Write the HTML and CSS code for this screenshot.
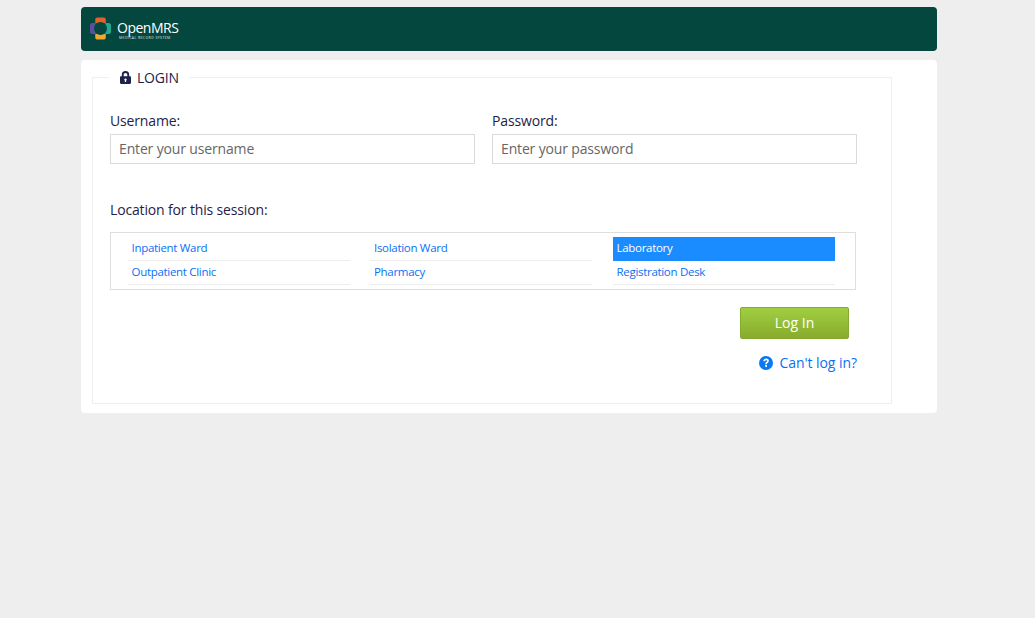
FILE: index.html
```html
<!DOCTYPE html>
<html lang="en">
<head>
<meta charset="utf-8">
<title>Login</title>
<link rel="stylesheet" href="styles.css">
</head>
<body>
<div class="page">
  <header class="topbar">
    <svg class="logo-mark" width="21" height="23" viewBox="0 0 22 23" aria-hidden="true">
      <path d="M5.500 2.200C5.500 .8 6.500 0 7.800 0H14.200C15.500 0 16.500 .8 16.500 2.200V6H5.500Z" fill="#e2622b"/>
      <path d="M16 5.800H19.500C21 5.800 22 6.800 22 8.200V14.800C22 16.200 21 17.200 19.500 17.200H16Z" fill="#25a78f"/>
      <path d="M5.500 17H16.500V20.800C16.500 22.200 15.500 23 14.200 23H7.800C6.500 23 5.500 22.200 5.500 20.800Z" fill="#f0a72d"/>
      <path d="M6 5.800H2.500C1 5.800 0 6.800 0 8.200V14.800C0 16.200 1 17.200 2.500 17.200H6Z" fill="#5b4f9e"/>
      <circle cx="11" cy="11.500" r="6.800" fill="#03473f"/>
    </svg>
    <div class="brand">
      <span class="brand-name">OpenMRS</span>
      <span class="brand-sub">MEDICAL RECORD SYSTEM</span>
    </div>
  </header>
  <main class="card">
    <form class="login">
      <div class="legend">
        <svg class="lock" width="11" height="13" viewBox="0 0 12 14" aria-hidden="true">
          <path fill-rule="evenodd" d="M2 5.500V4a4 4 0 0 1 8 0v1.500h.8c.7 0 1.200.5 1.200 1.200v6.100c0 .7-.5 1.200-1.200 1.200H1.200C.5 14 0 13.500 0 12.800V6.700c0-.7.500-1.200 1.200-1.200zM4 5.500h4V4a2 2 0 0 0-4 0zM6 8a1.300 1.300 0 0 0-.7 2.400V12h1.400v-1.600A1.300 1.300 0 0 0 6 8z" fill="#1f2248"/>
        </svg>
        <span>LOGIN</span>
      </div>
      <div class="fields">
        <label class="field">
          <span class="field-label">Username:</span>
          <input class="input" type="text" placeholder="Enter your username">
        </label>
        <label class="field">
          <span class="field-label">Password:</span>
          <input class="input" type="password" placeholder="Enter your password">
        </label>
      </div>
      <div class="location-label">Location for this session:</div>
      <ul class="locations">
        <li class="location">Inpatient Ward</li>
        <li class="location">Isolation Ward</li>
        <li class="location selected">Laboratory</li>
        <li class="location">Outpatient Clinic</li>
        <li class="location">Pharmacy</li>
        <li class="location">Registration Desk</li>
      </ul>
      <div class="actions">
        <button class="submit" type="button">Log In</button>
        <a class="help" href="#">
          <svg width="14" height="14" viewBox="0 0 15 15" aria-hidden="true">
            <circle cx="7.500" cy="7.500" r="7.500" fill="#0a78f0"/>
            <path d="M4.600 5.500C4.800 3.800 6 2.800 7.700 2.800C9.400 2.800 10.600 3.800 10.600 5.200C10.600 6.400 9.900 6.900 9.200 7.400C8.600 7.800 8.500 8.100 8.500 8.800H6.700C6.700 7.700 7 7.100 7.900 6.500C8.400 6.100 8.800 5.900 8.800 5.400C8.800 4.900 8.400 4.500 7.700 4.500C7 4.500 6.500 4.900 6.400 5.700Z M6.700 9.700H8.500V11.700H6.700Z" fill="#fff"/>
          </svg>
          <span>Can't log in?</span>
        </a>
      </div>
    </form>
  </main>
</div>
</body>
</html>
```
FILE: styles.css
```css
* { box-sizing: border-box; }
html, body { margin: 0; height: 100%; }
body {
  background: #eeeeee;
  font-family: "Open Sans", "Liberation Sans", sans-serif;
  color: #1f2248;
}
.page {
  width: 856px;
  margin-left: 81px;
  padding-top: 7px;
  display: flex;
  flex-direction: column;
  gap: 9px;
}
.topbar {
  height: 44px;
  background: #03473f;
  border-radius: 4px;
  display: flex;
  align-items: center;
  padding-left: 9px;
  gap: 4px;
}
.logo-mark { flex: none; margin-top: -1px; }
.brand {
  display: flex;
  flex-direction: column;
  align-items: flex-start;
  color: #fff;
  margin-left: 2px;
  margin-top: 3px;
}
.brand-name { font-size: 14px; line-height: 14px; letter-spacing: -0.500px; }
.brand-sub { font-size: 3.500px; line-height: 5px; letter-spacing: 0.400px; margin-left: 2px; opacity: .85; }
.card {
  height: 353px;
  background: #fff;
  border-radius: 4px;
  padding: 17px 45px 9px 11px;
}
.login {
  height: 327px;
  border: 1px solid #eeeeee;
  padding: 0 34px 0 17px;
  display: flex;
  flex-direction: column;
}
.legend {
  align-self: flex-start;
  margin: -10px 0 0 -1px;
  padding: 0 10px 0 11px;
  height: 20px;
  background: #fff;
  display: flex;
  align-items: center;
  gap: 6px;
  font-size: 14px;
  line-height: 20px;
  letter-spacing: -0.200px;
}
.lock { margin-top: -2px; }
.fields {
  display: flex;
  gap: 17px;
  margin-top: 23px;
}
.field { width: 365px; display: flex; flex-direction: column; }
.field-label { font-size: 14px; line-height: 20px; margin-bottom: 3px; letter-spacing: -0.150px; }
.input {
  width: 100%;
  height: 30px;
  border: 1px solid #dadada;
  background: #fff;
  padding: 0 8px 1px;
  font: 14px "Open Sans", "Liberation Sans", sans-serif;
  letter-spacing: -0.150px;
  outline: none;
}
.input::placeholder { color: #666; opacity: 1; }
.location-label { font-size: 14px; line-height: 20px; margin-top: 36px; letter-spacing: -0.150px; }
.locations {
  list-style: none;
  width: 746px;
  height: 58px;
  margin: 12px 0 0;
  padding: 4px 20px 0 16.500px;
  border: 1px solid #dedede;
  display: grid;
  grid-template-columns: repeat(3, 222.250px);
  grid-auto-rows: 24px;
  column-gap: 20.250px;
}
.location {
  font-size: 11.500px;
  letter-spacing: -0.300px;
  line-height: 22px;
  padding-left: 4px;
  color: #0a6ff5;
  border-bottom: 1px solid #eeeeee;
}
.location.selected { background: #1a8cff; color: #fff; border-bottom-color: #1a8cff; }
.actions {
  display: flex;
  flex-direction: column;
  align-items: flex-end;
  margin-top: 17px;
}
.submit {
  width: 109px;
  height: 32px;
  margin-right: 8px;
  padding: 0 0 2px;
  border: 1px solid #85a82e;
  border-radius: 2px;
  background: linear-gradient(#a0cf40, #88ab2e);
  color: #fff;
  font: 14px "Open Sans", "Liberation Sans", sans-serif;
}
.help {
  display: flex;
  align-items: center;
  gap: 6px;
  margin-top: 13px;
  height: 20px;
  color: #0a6ff5;
  font-size: 14px;
  letter-spacing: -0.050px;
  text-decoration: none;
}
.help svg { margin-top: 1px; }
```
